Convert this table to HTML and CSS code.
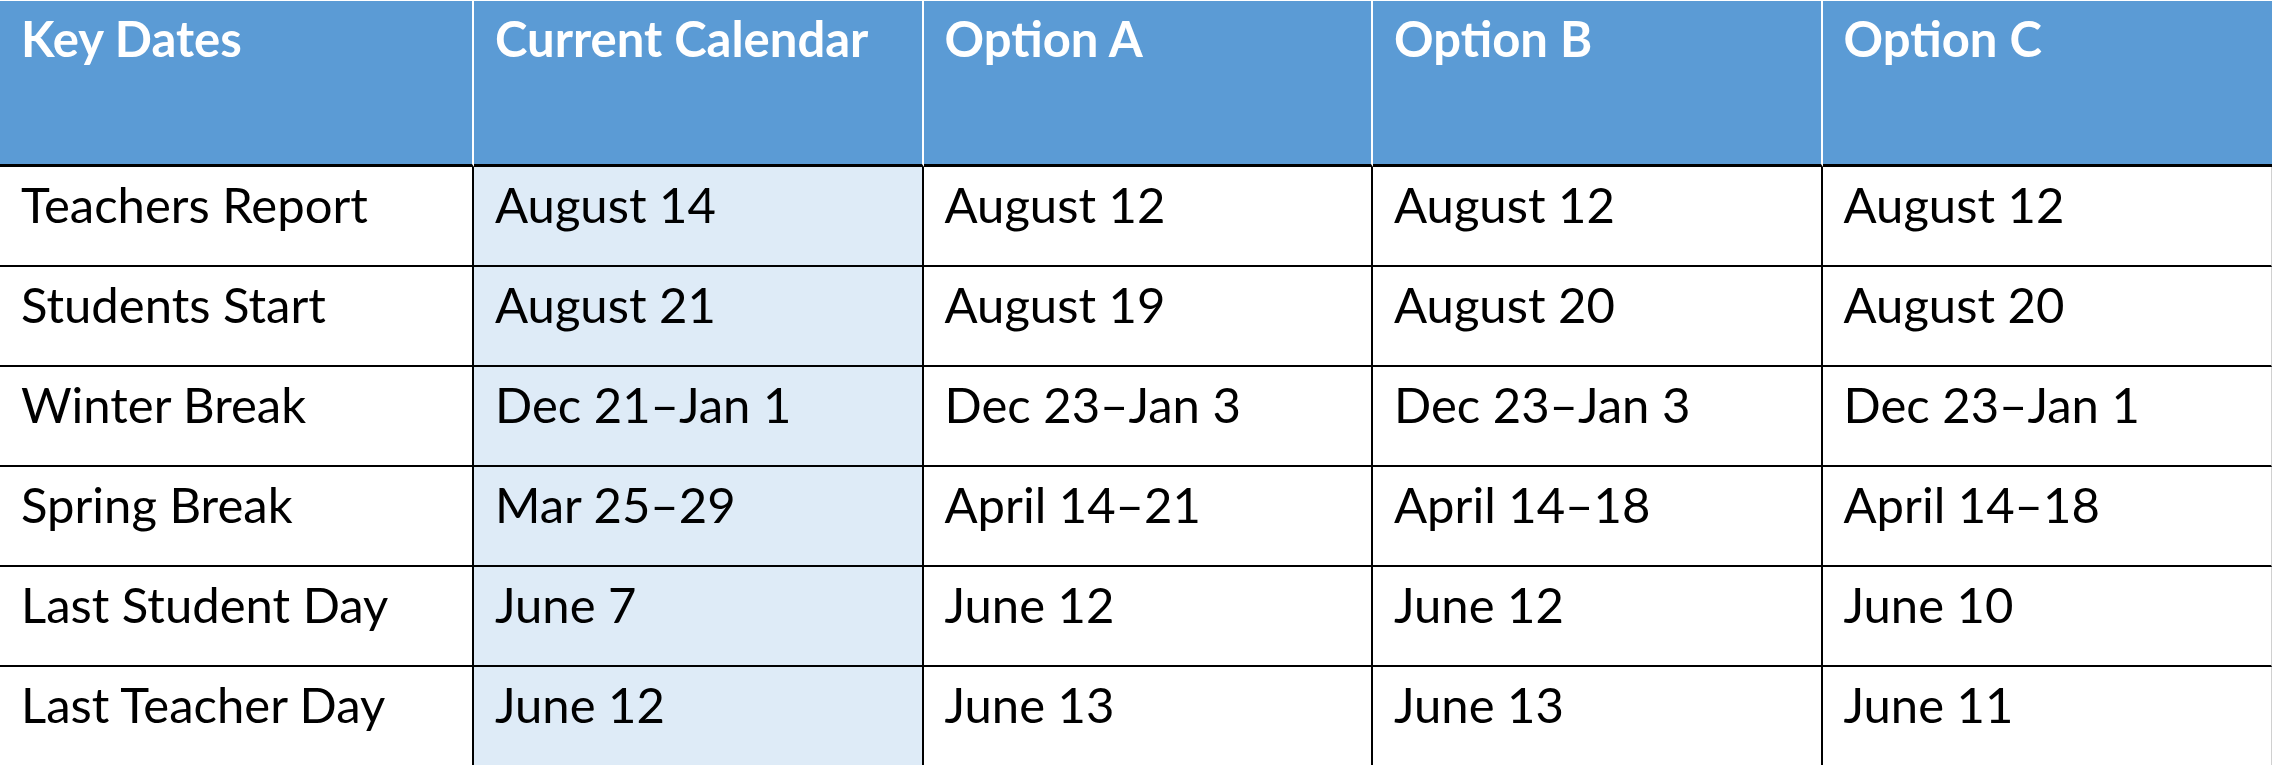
FILE: index.html
```html
<!DOCTYPE html>
<html lang="en">
<head>
<meta charset="utf-8">
<title>Key Dates</title>
<link rel="stylesheet" href="styles.css">
</head>
<body>
<table class="dates">
  <colgroup>
    <col class="c-key">
    <col class="c-opt">
    <col class="c-opt">
    <col class="c-opt">
    <col class="c-opt">
  </colgroup>
  <thead>
    <tr>
      <th>Key Dates</th>
      <th>Current Calendar</th>
      <th>Option A</th>
      <th>Option B</th>
      <th>Option C</th>
    </tr>
  </thead>
  <tbody>
    <tr>
      <td>Teachers Report</td>
      <td class="current">August 14</td>
      <td>August 12</td>
      <td>August 12</td>
      <td>August 12</td>
    </tr>
    <tr>
      <td>Students Start</td>
      <td class="current">August 21</td>
      <td>August 19</td>
      <td>August 20</td>
      <td>August 20</td>
    </tr>
    <tr>
      <td>Winter Break</td>
      <td class="current">Dec 21–Jan 1</td>
      <td>Dec 23–Jan 3</td>
      <td>Dec 23–Jan 3</td>
      <td>Dec 23–Jan 1</td>
    </tr>
    <tr>
      <td>Spring Break</td>
      <td class="current">Mar 25–29</td>
      <td>April 14–21</td>
      <td>April 14–18</td>
      <td>April 14–18</td>
    </tr>
    <tr>
      <td>Last Student Day</td>
      <td class="current">June 7</td>
      <td>June 12</td>
      <td>June 12</td>
      <td>June 10</td>
    </tr>
    <tr>
      <td>Last Teacher Day</td>
      <td class="current">June 12</td>
      <td>June 13</td>
      <td>June 13</td>
      <td>June 11</td>
    </tr>
  </tbody>
</table>
</body>
</html>
```
FILE: styles.css
```css
html, body {
  margin: 0;
  padding: 0;
  background: #ffffff;
}

body {
  padding-top: 1px;
  overflow: hidden;
}

.dates {
  width: 2272px;
  table-layout: fixed;
  border-collapse: separate;
  border-spacing: 0;
  font-family: Lato, "Liberation Sans", sans-serif;
  font-size: 49px;
  line-height: 1.2;
  color: #000000;
}

.c-key { width: 474px; }
.c-opt { width: 449.5px; }

.dates th,
.dates td {
  box-sizing: border-box;
  text-align: left;
  vertical-align: top;
  padding: 8px 20px 0 21px;
  white-space: nowrap;
}

.dates th {
  height: 166px;
  background: #5b9bd5;
  color: #ffffff;
  font-weight: 700;
  border-bottom: 3px solid #000000;
  border-right: 2px solid #ffffff;
}

.dates th:last-child {
  border-right: none;
}

.dates td {
  height: 100px;
  font-weight: 400;
  border-bottom: 2px solid #000000;
  border-right: 2px solid #000000;
}

.dates td:last-child {
  border-right: 1px solid #d0d0d0;
}

.dates td.current {
  background: #deebf7;
}
```
